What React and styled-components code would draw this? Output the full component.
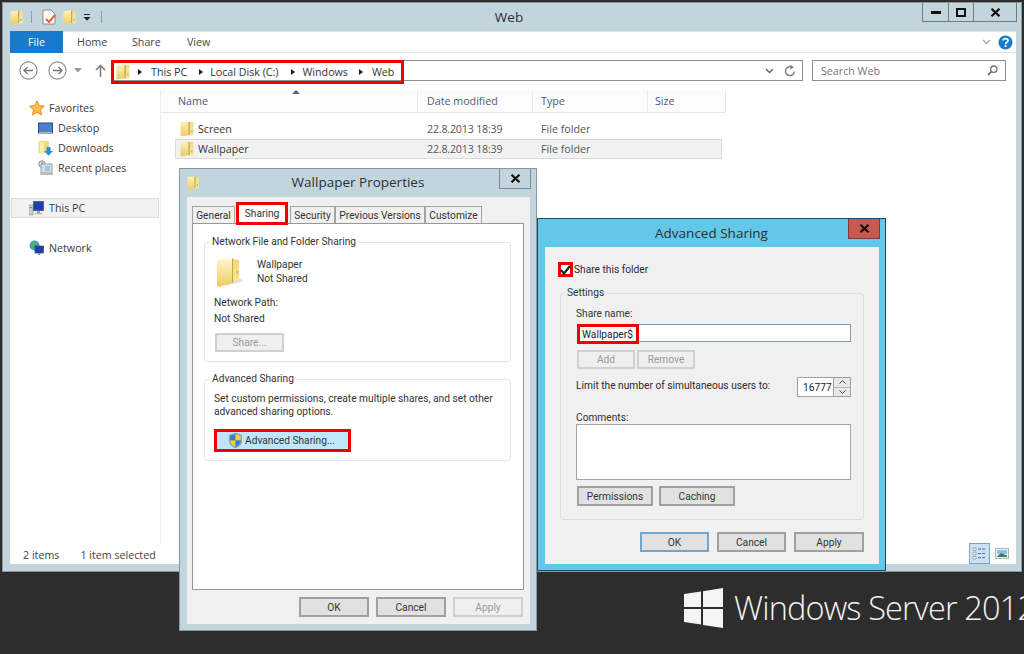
import React from "react";
import styled, { createGlobalStyle } from "styled-components";

const Global = createGlobalStyle`
  html, body { margin: 0; padding: 0; background: #2d2d2d; }
  * { box-sizing: border-box; }
  body { font-family: "Open Sans", "Noto Sans", sans-serif; font-size: 10.7px; color: #2b2b2b; }
`;

const Desktop = styled.div`
  position: relative; width: 1024px; height: 654px; overflow: hidden; background: #2d2d2d;
  display: flex; align-items: flex-start; padding: 586px 0 0 684px;
`;
const Brand = styled.div`display: flex; align-items: center; gap: 11px; flex: none;`;
const BrandText = styled.span`
  font-size: 32.5px; font-weight: 300; color: #f2f2f2; white-space: nowrap; line-height: 44px; letter-spacing: -0.85px;
`;

const Win = styled.section`
  position: absolute; left: ${p => p.$x}px; top: ${p => p.$y}px; width: ${p => p.$w}px; height: ${p => p.$h}px;
  background: ${p => p.$active ? "#63c7ea" : "#c3d5dc"};
  border: 1px solid ${p => p.$active ? "#1f4a60" : "#87989f"};
  display: flex; flex-direction: column;
`;
const Dialog = styled(Win)`
  font-family: "Roboto", "Open Sans", sans-serif; font-size: 10.2px;
`;
const TitleBar = styled.header`
  height: 28px; flex: none; display: flex; align-items: flex-start; position: relative;
`;
const TitleText = styled.h1`
  position: absolute; left: 0; right: 0; top: ${p => p.$top}px; margin: 0; text-align: center;
  font-family: "Open Sans", sans-serif;
  font-size: 13.5px; font-weight: 400; line-height: 18px; color: #2a2f33; pointer-events: none;
  padding-right: ${p => p.$shift || 0}px;
`;
const Spacer = styled.div`flex: 1;`;
const QuickBar = styled.div`display: flex; align-items: center; height: 28px; padding-left: 7px;`;
const QSep = styled.i`display: block; width: 1px; height: 12px; background: #8d9ea6; margin: 0 ${p => p.$r}px 0 ${p => p.$l}px;`;
const QGap = styled.span`width: ${p => p.$w}px; flex: none;`;
const CtrlGroup = styled.div`display: flex; margin-right: 4px;`;
const Ctrl = styled.div`
  width: ${p => p.$w}px; height: 19px; display: flex; align-items: center; justify-content: center;
  border: 1px solid #6d7b82; border-top: 0; border-left-width: ${p => p.$first ? 1 : 0}px;
`;
const CloseBtn = styled.div`
  width: 32px; height: 20px; margin: 0 5px 0 0; display: flex; align-items: center; justify-content: center;
  background: ${p => p.$active ? "#c75a50" : "#c3d5dc"};
  border: 1px solid ${p => p.$active ? "#7d3a34" : "#7c8b92"}; border-top: 0;
`;

const Pane = styled.div`flex: 1; margin: 0 5px 7px 7px; background: #fff; display: flex; flex-direction: column; min-height: 0;`;
const Ribbon = styled.nav`
  height: 22px; flex: none; display: flex; align-items: center; border-bottom: 1px solid #dfe2e4; border-top: 1px solid #dbe5e9;
`;
const FileTab = styled.div`
  width: 53px; height: 22px; margin-top: -1px; background: #1979ca; color: #fff; display: flex; align-items: center; justify-content: center;
`;
const RibTab = styled.div`width: ${p => p.$w}px; padding-left: ${p => p.$pl}px; color: #444;`;
const RibRight = styled.div`margin-left: auto; display: flex; align-items: center; gap: 7px; padding-right: 3px;`;

const NavRow = styled.div`height: 37px; flex: none; display: flex; align-items: flex-start; padding-top: 7px;`;
const NavIcons = styled.div`display: flex; align-items: center; height: 21px; padding-left: 9px; width: 101px; flex: none;`;
const Address = styled.div`
  width: 692px; height: 21px; border: 1px solid #8f8f8f; display: flex; align-items: flex-start; flex: none;
`;
const RedBox = styled.div`
  border: 3px solid #ee0000; background: transparent;
`;
const CrumbBox = styled(RedBox)`
  width: 293px; height: 24px; margin: -1px 0 0 -1px; display: flex; align-items: center; padding-left: 2px; color: #333; flex: none;
`;
const Crumb = styled.span`white-space: nowrap;`;
const CrumbArrow = styled.i`
  display: block; width: 0; height: 0; border-left: 4px solid #1c1c1c; border-top: 3.5px solid transparent; border-bottom: 3.5px solid transparent; margin: 0 ${p => p.$r}px 0 ${p => p.$l}px;
`;
const AddrRight = styled.div`margin-left: auto; display: flex; align-items: center; height: 19px; gap: 10px; padding-right: 6px;`;
const Search = styled.div`
  width: 194px; height: 21px; margin-left: 9px; border: 1px solid #8f8f8f; display: flex; align-items: center; justify-content: space-between; padding: 0 7px 0 8px; color: #777; flex: none;
`;

const Body = styled.div`flex: 1; display: flex; min-height: 0;`;
const Sidebar = styled.aside`width: 151px; flex: none; border-right: 1px solid #eceff1; padding-top: 8px;`;
const SideItem = styled.div`
  height: 20px; display: flex; align-items: center; gap: ${p => p.$gap}px; padding-left: ${p => p.$sub ? 26 : 17}px; margin-bottom: ${p => p.$mb || 0}px; color: #3a3a3a;
  margin-left: 1px; margin-right: 1px; border: 1px solid ${p => p.$sel ? "#dadada" : "transparent"}; background: ${p => p.$sel ? "#f2f2f2" : "transparent"};
`;
const Content = styled.main`flex: 1; min-width: 0; display: flex; flex-direction: column; position: relative;`;
const ListHead = styled.div`
  width: 565px; height: 23px; flex: none; display: grid; grid-template-columns: 257px 115px 115px 78px; background: #fcfcfc; border-bottom: 1px solid #e6e6e6; border-right: 1px solid #e6e6e6; position: relative;
`;
const HeadCell = styled.div`
  display: flex; align-items: center; padding-left: ${p => p.$pl}px; color: #4f6073; border-right: ${p => p.$last ? 0 : 1}px solid #ececec;
`;
const SortMark = styled.i`
  position: absolute; left: 131px; top: 0; width: 0; height: 0; border-left: 4px solid transparent; border-right: 4px solid transparent; border-bottom: 4px solid #52677f;
`;
const Rows = styled.div`padding: 6px 0 0 14px; width: 561px;`;
const Row = styled.div`
  height: 20px; display: grid; grid-template-columns: 251px 114px 1fr; align-items: center; color: #555;
  border: 1px solid ${p => p.$sel ? "#dadada" : "transparent"}; background: ${p => p.$sel ? "#f2f2f2" : "transparent"};
`;
const DateCell = styled.span`letter-spacing: -0.2px;`;
const NameCell = styled.div`display: flex; align-items: center; gap: 4px; padding-left: 4px; color: #333;`;
const Status = styled.footer`height: 21px; flex: none; display: flex; align-items: center; gap: 21px; padding: 0 7px 0 13px; color: #444;`;
const StatusText = styled.span`position: relative; top: 1px;`;
const ViewBtns = styled.div`margin-left: auto; display: flex; align-items: center; gap: 5px;`;
const ViewBtn = styled.div`
  width: 21px; height: 21px; display: flex; align-items: center; justify-content: center; background: #c9e2f5; border: 1px solid #7ba6c9;
`;

const Client = styled.div`
  flex: 1; background: #f0f0f0; margin: 0 6px 6px 7px; display: flex; flex-direction: column; padding: ${p => p.$pad};
`;
const TabRow = styled.div`display: flex; align-items: flex-start; height: 17px; flex: none; position: relative; z-index: 1;`;
const Tab = styled.div`
  width: ${p => p.$w}px; height: 17px; border: 1px solid #a3a3a3; border-bottom: 0; display: flex; align-items: center; justify-content: center; color: #333; background: #f0f0f0; white-space: nowrap;
`;
const SelTab = styled(RedBox)`
  width: 52px; height: 23px; margin: -4px 2px 0 1px; background: #fff; display: flex; align-items: center; justify-content: center; color: #333;
`;
const TabPanel = styled.div`
  height: 367px; flex: none; background: #fff; border: 1px solid #989898; padding: 11px 12px 0 11px;
`;
const Group = styled.fieldset`
  margin: ${p => p.$m || "0"}; min-width: 0; padding: ${p => p.$pad}; border: 1px solid ${p => p.$dk ? "#d5dfe4" : "#dfe6ea"}; border-radius: 3px; width: ${p => p.$w}px;
`;
const Legend = styled.legend`padding: 0 3px; margin-left: ${p => p.$ml}px; line-height: 14px; color: #333;`;
const Line = styled.div`line-height: ${p => p.$lh || 14}px; margin-top: ${p => p.$mt || 0}px; color: #333; white-space: nowrap;`;
const FolderRow = styled.div`display: flex; gap: 12px; margin: 0 0 0 1px;`;
const BigFolderText = styled.div`display: flex; flex-direction: column; padding-top: 1px;`;

const Btn = styled.div`
  width: ${p => p.$w || 70}px; height: ${p => p.$h || 20}px; margin-top: ${p => p.$mt || 0}px; margin-left: ${p => p.$ml || 0}px; flex: none;
  display: flex; align-items: center; justify-content: center; white-space: nowrap;
  background: ${p => p.$off ? "#efefef" : "#e1e1e1"};
  border: 2px solid ${p => p.$off ? "#d0d0d0" : p.$def ? "#6ea5d3" : "#a0a0a0"};
  color: ${p => p.$off ? "#9a9a9a" : "#333"};
`;
const ShieldBtn = styled(RedBox)`
  width: 137px; height: 23px; margin: 11px 0 0 0; display: flex; align-items: center; padding-left: 11px; gap: 2px; background: #bee6fd; color: #333; white-space: nowrap;
`;
const Footer = styled.div`display: flex; justify-content: flex-end; gap: ${p => p.$gap}px; margin-top: ${p => p.$mt}px; padding-right: ${p => p.$pr}px;`;

const CheckRow = styled.div`display: flex; align-items: center; height: 15px; gap: 1px; flex: none;`;
const CheckBox = styled(RedBox)`width: 15px; height: 15px; display: flex; align-items: center; justify-content: center; background: #fff;`;
const FieldInput = styled.div`
  width: 274px; height: 18px; margin: 3px 0 0 1px; background: #fff; border: 1px solid #7e9dbd; display: flex;
`;
const NameBox = styled(RedBox)`
  width: 62px; height: 20px; margin: -1px 0 0 -1px; display: flex; align-items: center; padding-left: 2px; color: #222; white-space: nowrap; flex: none;
`;
const BtnRow = styled.div`display: flex; gap: ${p => p.$gap}px; margin: ${p => p.$m};`;
const LimitRow = styled.div`display: flex; align-items: center; justify-content: space-between; width: 275px; margin-top: 8px;`;
const LimitLabel = styled.span`padding-bottom: 4px;`;
const Spin = styled.div`width: 54px; height: 20px; display: flex; background: #fff; border: 1px solid #a0a0a0;`;
const SpinValue = styled.div`flex: 1; display: flex; align-items: center; padding-left: 5px; color: #222; overflow: hidden;`;
const SpinArrows = styled.div`width: 17px; display: flex; flex-direction: column; background: #e8e8e8; border-left: 1px solid #a0a0a0;`;
const SpinArrow = styled.div`flex: 1; display: flex; align-items: center; justify-content: center; border-bottom: ${p => p.$top ? 1 : 0}px solid #b5b5b5;`;
const TextArea = styled.div`width: 275px; height: 56px; background: #fff; border: 1px solid #a3a3a3;`;

const FolderSm = ({ s = 16 }) => (
  <svg width={s * 0.875} height={s} viewBox="0 0 14 16" style={{ flex: "none" }}>
    <defs>
      <linearGradient id="fy" x1="0" y1="0" x2="0" y2="1"><stop offset="0" stopColor="#fbf3bf" /><stop offset="1" stopColor="#eccc62" /></linearGradient>
      <linearGradient id="fz" x1="0" y1="0" x2="0" y2="1"><stop offset="0" stopColor="#f3dd89" /><stop offset="1" stopColor="#f7e8a4" /></linearGradient>
    </defs>
    <path d="M1.5 1 H13.5 V14.5 H3 Z" fill="url(#fz)" />
    <path d="M0.5 1.2 L8.5 0.5 V14.2 L0.5 15.5 Z" fill="url(#fy)" />
    <path d="M8.5 0.5 L9.8 1.2 V14 L8.5 14.2 Z" fill="#c9a642" />
    <rect x="11.2" y="9.5" width="1.4" height="2" fill="#8fb0a0" />
  </svg>
);

const FolderBig = () => (
  <svg width="30" height="31" viewBox="0 0 30 31" style={{ flex: "none" }}>
    <defs>
      <linearGradient id="fb" x1="0" y1="0" x2="0" y2="1"><stop offset="0" stopColor="#fff9d2" /><stop offset="1" stopColor="#ecca5e" /></linearGradient>
      <linearGradient id="fc" x1="0" y1="0" x2="0" y2="1"><stop offset="0" stopColor="#efd67e" /><stop offset="1" stopColor="#f8e79d" /></linearGradient>
    </defs>
    <path d="M10 29 L29 24 L24 21 L12 23 Z" fill="#c4c4c4" opacity="0.55" />
    <path d="M5 3 L16 2 L24 3 V24 L7 27 Z" fill="url(#fc)" />
    <path d="M2 3 L17 0.5 V26 L4 30 L2 29 Z" fill="url(#fb)" />
    <path d="M17 0.5 L18 2 V26 L17 26 Z" fill="#c5a644" />
    <rect x="21.5" y="14" width="2" height="3" fill="#d7bb63" />
  </svg>
);

const Star = () => (
  <svg width="16" height="16" viewBox="0 0 16 16" style={{ flex: "none" }}>
    <path d="M8 .8 L10.2 5.6 L15.4 6.2 L11.5 9.7 L12.6 15 L8 12.3 L3.4 15 L4.5 9.7 L.6 6.2 L5.8 5.6 Z" fill="#fbbf47" stroke="#ea8a2c" strokeWidth="1" />
  </svg>
);
const Monitor = () => (
  <svg width="15" height="13" viewBox="0 0 15 13" style={{ flex: "none" }}>
    <rect x="0" y="0.5" width="15" height="11" fill="#2a4a88" />
    <rect x="1" y="1.5" width="13" height="8.5" fill="#4c7fcf" />
    <rect x="1" y="10" width="13" height="1" fill="#a9b6c9" />
  </svg>
);
const Downloads = () => (
  <svg width="15" height="16" viewBox="0 0 15 16" style={{ flex: "none" }}>
    <path d="M0.5 1.5 L7 .5 L11 1.5 V13 H0.5 Z" fill="#efd97f" />
    <path d="M2 2.5 H6 V14 L2 15 Z" fill="#f9eeb0" />
    <path d="M8.5 7 H12.5 V11 H15 L10.5 15.8 L6 11 H8.5 Z" fill="#2f8fdc" />
  </svg>
);
const Recent = () => (
  <svg width="15" height="16" viewBox="0 0 15 16" style={{ flex: "none" }}>
    <circle cx="4" cy="4" r="3.2" fill="#e8e8e8" stroke="#888" />
    <path d="M4 2 V4 H6" stroke="#666" fill="none" strokeWidth=".8" />
    <rect x="3" y="4" width="11" height="9" fill="#d5dde2" stroke="#9aa4aa" />
    <rect x="7" y="6" width="5" height="5" fill="#9fc4e6" />
    <rect x="2" y="13" width="13" height="2" fill="#bcbcbc" />
  </svg>
);
const ThisPc = () => (
  <svg width="15" height="15" viewBox="0 0 15 15" style={{ flex: "none" }}>
    <rect x="0" y="4" width="4" height="10" fill="#c8ced2" stroke="#8a9094" strokeWidth=".6" />
    <rect x="1" y="6" width="2" height="1" fill="#3bb54a" />
    <rect x="4.5" y="0.5" width="10" height="9" fill="#1c3fb8" stroke="#4a5560" strokeWidth=".8" />
    <rect x="8" y="10" width="3" height="2" fill="#98a0a6" />
    <rect x="6" y="12" width="7" height="1.4" fill="#b4babd" />
  </svg>
);
const NetworkIcon = () => (
  <svg width="15" height="16" viewBox="0 0 15 16" style={{ flex: "none" }}>
    <circle cx="5.5" cy="5.5" r="5" fill="#3f9ad8" />
    <path d="M2 3 Q5 1 7 3 L6 6 L3 7 Z" fill="#4fb848" />
    <rect x="6" y="6" width="8.5" height="7" fill="#1c3fb8" stroke="#3d4954" strokeWidth=".7" />
    <rect x="9.3" y="13" width="2" height="2" fill="#8a9094" />
  </svg>
);
const Circle = ({ d }) => (
  <svg width="19" height="19" viewBox="0 0 19 19" style={{ flex: "none" }}>
    <circle cx="9.5" cy="9.5" r="8.6" fill="#fff" stroke="#8b8b8b" strokeWidth="1.1" />
    <path d={d} fill="none" stroke="#777" strokeWidth="1.3" />
  </svg>
);
const Chevron = ({ c = "#666", w = 9 }) => (
  <svg width={w} height="6" viewBox="0 0 9 6" style={{ flex: "none" }}>
    <path d="M1 1 L4.5 4.5 L8 1" fill="none" stroke={c} strokeWidth="1.4" />
  </svg>
);
const Shield = () => (
  <svg width="15" height="17" viewBox="0 0 15 17" style={{ flex: "none" }}>
    <path d="M7.5 .8 L14 3 V9 C14 12.5 11 15 7.5 16.2 C4 15 1 12.5 1 9 V3 Z" fill="#8fa0ad" />
    <path d="M7.5 2.3 V8.5 H2.3 V3.8 Z" fill="#2f7fd0" />
    <path d="M7.5 2.3 L12.7 3.8 V8.5 H7.5 Z" fill="#f4cf3a" />
    <path d="M2.3 8.5 H7.5 V14.7 C5 13.7 2.6 12 2.3 9.2 Z" fill="#f4cf3a" />
    <path d="M7.5 8.5 H12.7 C12.4 12 10 13.7 7.5 14.7 Z" fill="#2f7fd0" />
  </svg>
);
const XMark = () => (
  <svg width="11" height="9" viewBox="0 0 11 9"><path d="M1.5 .8 L9.5 8.2 M9.5 .8 L1.5 8.2" stroke="#111" strokeWidth="2.2" /></svg>
);

export default function App() {
  return (
    <>
      <Global />
      <Desktop>
        <Brand>
          <svg width="39" height="40" viewBox="0 0 39 40" style={{ flex: "none" }}>
            <path d="M0 6 L17 3.5 V19 H0 Z M19 3.2 L39 0 V19 H19 Z M0 21 H17 V36.6 L0 34 Z M19 21 H39 V40 L19 36.9 Z" fill="#f5f5f5" />
          </svg>
          <BrandText>Windows Server 2012</BrandText>
        </Brand>

        <Win $x={2} $y={2} $w={1020} $h={570}>
          <TitleBar>
            <QuickBar>
              <FolderSm s={15} />
              <QSep $l={8} $r={10} />
              <svg width="14" height="16" viewBox="0 0 14 16" style={{ flex: "none" }}>
                <path d="M1 1 H9 L13 5 V15 H1 Z" fill="#fdfdfd" stroke="#8a8a8a" />
                <path d="M4 10 L7 13 L13 6" fill="none" stroke="#e8613c" strokeWidth="2" />
              </svg>
              <QGap $w={7} />
              <FolderSm s={15} />
              <QGap $w={7} />
              <svg width="8" height="7" viewBox="0 0 8 7" style={{ flex: "none" }}>
                <rect x="1" y="0" width="6" height="1" fill="#222" />
                <path d="M0.5 3 H7.5 L4 6.8 Z" fill="#222" />
              </svg>
              <QSep $l={10} $r={0} />
            </QuickBar>
            <TitleText $top={5} $shift={6}>Web</TitleText>
            <Spacer />
            <CtrlGroup>
              <Ctrl $w={27} $first>
                <svg width="10" height="3"><rect width="10" height="3" fill="#111" /></svg>
              </Ctrl>
              <Ctrl $w={25}>
                <svg width="10" height="9"><rect x="1" y="1" width="8" height="7" fill="none" stroke="#111" strokeWidth="2" /></svg>
              </Ctrl>
              <Ctrl $w={43}><XMark /></Ctrl>
            </CtrlGroup>
          </TitleBar>
          <Pane>
            <Ribbon>
              <FileTab>File</FileTab>
              <RibTab $w={55} $pl={14}>Home</RibTab>
              <RibTab $w={55} $pl={14}>Share</RibTab>
              <RibTab $w={50} $pl={14}>View</RibTab>
              <RibRight>
                <Chevron c="#a8a8a8" />
                <svg width="15" height="15" viewBox="0 0 15 15">
                  <circle cx="7.5" cy="7.5" r="7" fill="#1979ca" />
                  <path d="M5 5.6 C5 3 10 3 10 5.6 C10 7.3 7.6 7.2 7.6 9.2" fill="none" stroke="#fff" strokeWidth="1.7" />
                  <rect x="6.7" y="10.2" width="1.8" height="1.8" fill="#fff" />
                </svg>
              </RibRight>
            </Ribbon>
            <NavRow>
              <NavIcons>
                <Circle d="M14 9.5 H5 M8.5 6 L5 9.5 L8.5 13" />
                <QGap $w={10} />
                <Circle d="M5 9.5 H14 M10.5 6 L14 9.5 L10.5 13" />
                <QGap $w={7} />
                <svg width="8" height="5" viewBox="0 0 8 5" style={{ flex: "none" }}><path d="M0 0 H8 L4 4.5 Z" fill="#9a9a9a" /></svg>
                <QGap $w={13} />
                <svg width="11" height="13" viewBox="0 0 11 13" style={{ flex: "none" }}><path d="M5.5 13 V1.5 M1 6 L5.5 1.5 L10 6" fill="none" stroke="#7d7d7d" strokeWidth="1.6" /></svg>
              </NavIcons>
              <Address>
                <CrumbBox>
                  <FolderSm s={16} />
                  <CrumbArrow $l={8} $r={9} />
                  <Crumb>This PC</Crumb>
                  <CrumbArrow $l={12} $r={7} />
                  <Crumb>Local Disk (C:)</Crumb>
                  <CrumbArrow $l={12} $r={8} />
                  <Crumb>Windows</Crumb>
                  <CrumbArrow $l={11} $r={9} />
                  <Crumb>Web</Crumb>
                </CrumbBox>
                <AddrRight>
                  <Chevron c="#666" />
                  <svg width="12" height="12" viewBox="0 0 12 12" style={{ flex: "none" }}>
                    <path d="M10.5 6.5 A4.5 4.5 0 1 1 7 1.7" fill="none" stroke="#7c7c7c" strokeWidth="1.4" />
                    <path d="M6.2 0 L10 2 L6.2 4.6 Z" fill="#7c7c7c" />
                  </svg>
                </AddrRight>
              </Address>
              <Search>
                <span>Search Web</span>
                <svg width="11" height="11" viewBox="0 0 11 11" style={{ flex: "none" }}>
                  <circle cx="6.8" cy="4.2" r="3.2" fill="none" stroke="#777" strokeWidth="1.3" />
                  <path d="M4.5 6.5 L1 10" stroke="#777" strokeWidth="1.8" />
                </svg>
              </Search>
            </NavRow>
            <Body>
              <Sidebar>
                <SideItem $gap={4}><Star />Favorites</SideItem>
                <SideItem $sub $gap={5}><Monitor />Desktop</SideItem>
                <SideItem $sub $gap={5}><Downloads />Downloads</SideItem>
                <SideItem $sub $gap={5} $mb={20}><Recent />Recent places</SideItem>
                <SideItem $sel $gap={5} $mb={20}><ThisPc />This PC</SideItem>
                <SideItem $gap={5}><NetworkIcon />Network</SideItem>
              </Sidebar>
              <Content>
                <ListHead>
                  <SortMark />
                  <HeadCell $pl={17}>Name</HeadCell>
                  <HeadCell $pl={9}>Date modified</HeadCell>
                  <HeadCell $pl={8}>Type</HeadCell>
                  <HeadCell $pl={7} $last>Size</HeadCell>
                </ListHead>
                <Rows>
                  <Row>
                    <NameCell><FolderSm s={16} />Screen</NameCell>
                    <DateCell>22.8.2013 18:39</DateCell>
                    <span>File folder</span>
                  </Row>
                  <Row $sel>
                    <NameCell><FolderSm s={16} />Wallpaper</NameCell>
                    <DateCell>22.8.2013 18:39</DateCell>
                    <span>File folder</span>
                  </Row>
                </Rows>
              </Content>
            </Body>
            <Status>
              <StatusText>2 items</StatusText>
              <StatusText>1 item selected</StatusText>
              <ViewBtns>
                <ViewBtn>
                  <svg width="15" height="15" viewBox="0 0 15 15">
                    <path d="M1 2 H4 V4.5 H1 Z M1 6.2 H4 V8.7 H1 Z M1 10.5 H4 V13 H1 Z" fill="#fff" stroke="#7b8b99" strokeWidth=".7" />
                    <path d="M6 3 H14 M6 7.5 H14 M6 11.7 H14" stroke="#5f6f7d" strokeDasharray="3 1" />
                  </svg>
                </ViewBtn>
                <svg width="14" height="11" viewBox="0 0 14 11" style={{ flex: "none" }}>
                  <rect x=".5" y=".5" width="13" height="10" fill="#eef3f7" stroke="#a8b6c0" />
                  <rect x="2" y="2" width="10" height="4" fill="#8fc1e8" />
                  <path d="M2 8.6 L6 5 L12 7.5 V9 H2 Z" fill="#3f7f5c" />
                </svg>
              </ViewBtns>
            </Status>
          </Pane>
        </Win>

        <Dialog $x={179} $y={168} $w={358} $h={463}>
          <TitleBar>
            <QuickBar><FolderSm s={14} /></QuickBar>
            <TitleText $top={4}>Wallpaper Properties</TitleText>
            <Spacer />
            <CloseBtn><XMark /></CloseBtn>
          </TitleBar>
          <Client $pad="9px 6px 0 5px">
            <TabRow>
              <Tab $w={43}>General</Tab>
              <SelTab>Sharing</SelTab>
              <Tab $w={45}>Security</Tab>
              <Tab $w={90}>Previous Versions</Tab>
              <Tab $w={57}>Customize</Tab>
            </TabRow>
            <TabPanel>
              <Group $w={307} $pad="8px 9px 9px">
                <Legend $ml={-5}>Network File and Folder Sharing</Legend>
                <FolderRow>
                  <FolderBig />
                  <BigFolderText>
                    <Line>Wallpaper</Line>
                    <Line>Not Shared</Line>
                  </BigFolderText>
                </FolderRow>
                <Line $mt={8}>Network Path:</Line>
                <Line $mt={2}>Not Shared</Line>
                <Btn $off $w={69} $h={19} $mt={7} $ml={1}>Share...</Btn>
              </Group>
              <Group $w={307} $pad="6px 9px 8px" $m="10px 0 0">
                <Legend $ml={-5}>Advanced Sharing</Legend>
                <Line $lh={13}>Set custom permissions, create multiple shares, and set other</Line>
                <Line $lh={13}>advanced sharing options.</Line>
                <ShieldBtn><Shield />Advanced Sharing...</ShieldBtn>
              </Group>
            </TabPanel>
            <Footer $gap={7} $mt={7} $pr={1}>
              <Btn>OK</Btn>
              <Btn>Cancel</Btn>
              <Btn $off>Apply</Btn>
            </Footer>
          </Client>
        </Dialog>

        <Dialog $x={537} $y={218} $w={349} $h={353} $active>
          <TitleBar>
            <TitleText $top={5}>Advanced Sharing</TitleText>
            <Spacer />
            <CloseBtn $active><XMark /></CloseBtn>
          </TitleBar>
          <Client $pad="15px 0 0 13px">
            <CheckRow>
              <CheckBox>
                <svg width="11" height="10" viewBox="0 0 11 10" style={{ flex: "none" }}><path d="M1 5 L4 8.5 L10 1" fill="none" stroke="#222" strokeWidth="2.2" /></svg>
              </CheckBox>
              <span>Share this folder</span>
            </CheckRow>
            <Group $w={304} $pad="7px 15px 13px" $m="9px 0 0 2px" $dk>
              <Legend $ml={-12}>Settings</Legend>
              <Line>Share name:</Line>
              <FieldInput>
                <NameBox>Wallpaper$</NameBox>
              </FieldInput>
              <BtnRow $gap={2} $m="8px 0 0 1px">
                <Btn $off $w={58} $h={19}>Add</Btn>
                <Btn $off $w={58} $h={19}>Remove</Btn>
              </BtnRow>
              <LimitRow>
                <LimitLabel>Limit the number of simultaneous users to:</LimitLabel>
                <Spin>
                  <SpinValue>16777</SpinValue>
                  <SpinArrows>
                    <SpinArrow $top><svg width="7" height="4" viewBox="0 0 7 4"><path d="M.5 3.5 L3.5 .7 L6.5 3.5" fill="none" stroke="#444" /></svg></SpinArrow>
                    <SpinArrow><svg width="7" height="4" viewBox="0 0 7 4"><path d="M.5 .5 L3.5 3.3 L6.5 .5" fill="none" stroke="#444" /></svg></SpinArrow>
                  </SpinArrows>
                </Spin>
              </LimitRow>
              <Line $mt={14} $lh={13}>Comments:</Line>
              <TextArea />
              <BtnRow $gap={6} $m="6px 0 0 1px">
                <Btn $w={76} $h={20}>Permissions</Btn>
                <Btn $w={76} $h={20}>Caching</Btn>
              </BtnRow>
            </Group>
            <Footer $gap={8} $mt={12} $pr={15}>
              <Btn $def $w={69}>OK</Btn>
              <Btn $w={69}>Cancel</Btn>
              <Btn>Apply</Btn>
            </Footer>
          </Client>
        </Dialog>
      </Desktop>
    </>
  );
}
